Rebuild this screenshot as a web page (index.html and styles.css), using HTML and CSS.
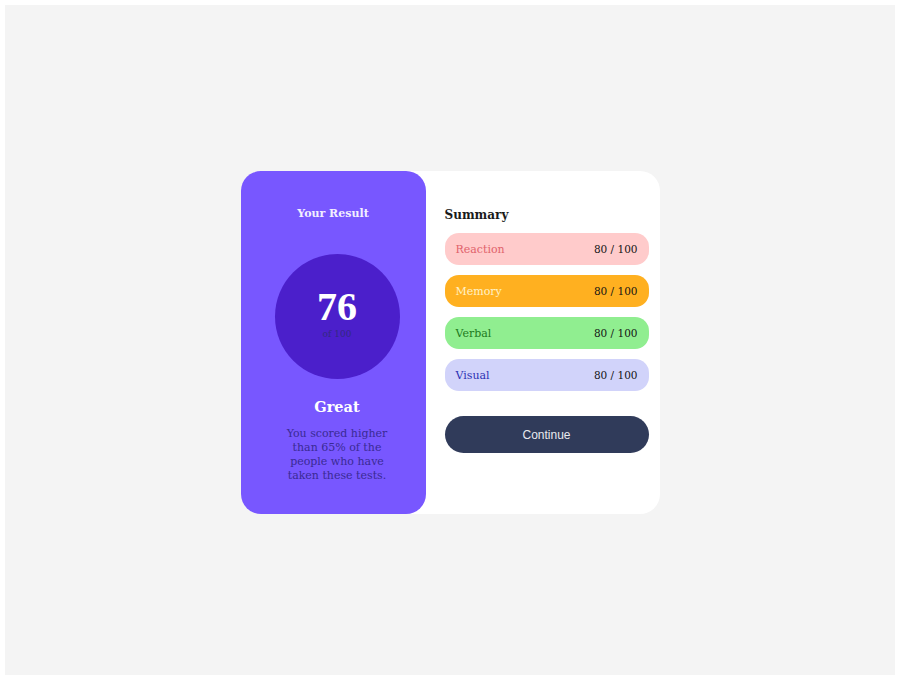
FILE: index.html
```html
<!DOCTYPE html>
<html lang="en">
<head>
<meta charset="utf-8">
<title>Results summary</title>
<link rel="stylesheet" href="styles.css">
</head>
<body>
<main class="page">
  <section class="card">
    <div class="result">
      <h1 class="result-title">Your Result</h1>
      <div class="score-circle">
        <span class="score">76</span>
        <span class="score-of">of 100</span>
      </div>
      <h2 class="grade">Great</h2>
      <p class="result-text">You scored higher than 65% of the people who have taken these tests.</p>
    </div>
    <div class="summary">
      <h2 class="summary-title">Summary</h2>
      <ul class="rows">
        <li class="row row-reaction"><span class="row-name">Reaction</span><span class="row-score">80 / 100</span></li>
        <li class="row row-memory"><span class="row-name">Memory</span><span class="row-score">80 / 100</span></li>
        <li class="row row-verbal"><span class="row-name">Verbal</span><span class="row-score">80 / 100</span></li>
        <li class="row row-visual"><span class="row-name">Visual</span><span class="row-score">80 / 100</span></li>
      </ul>
      <button class="continue">Continue</button>
    </div>
  </section>
</main>
</body>
</html>
```
FILE: styles.css
```css
html, body {
  margin: 0;
  padding: 0;
  background: #ffffff;
}
body {
  padding: 5px;
  font-family: "DejaVu Serif", "Liberation Serif", serif;
}
.page {
  box-sizing: border-box;
  width: 890px;
  height: 675px;
  background: #f4f4f4;
  display: flex;
  align-items: center;
  justify-content: center;
}
.card {
  width: 419px;
  height: 343px;
  background: #ffffff;
  border-radius: 20px;
  display: grid;
  grid-template-columns: 185px 1fr;
}
.result {
  background: #7857ff;
  border-radius: 20px;
  display: flex;
  flex-direction: column;
  align-items: center;
  padding-top: 35px;
}
.result-title {
  margin: 0;
  font-size: 11px;
  line-height: 16px;
  font-weight: bold;
  color: #f2eeff;
}
.score-circle {
  margin: 32px 0 0 8px;
  width: 125px;
  height: 125px;
  border-radius: 50%;
  background: #4b1fcb;
  display: flex;
  flex-direction: column;
  align-items: center;
  justify-content: center;
}
.score {
  font-family: "Liberation Serif", "DejaVu Serif", serif;
  font-size: 40px;
  line-height: 32px;
  font-weight: bold;
  color: #ffffff;
  margin-top: -4px;
}
.score-of {
  font-size: 9px;
  line-height: 10px;
  color: #33297f;
  margin-top: 6px;
}
.grade {
  margin: 17px 0 0 8px;
  font-size: 14.5px;
  line-height: 22px;
  font-weight: bold;
  color: #ffffff;
}
.result-text {
  margin: 9px 0 0 8px;
  width: 120px;
  text-align: center;
  font-size: 11px;
  line-height: 14px;
  color: #3a2a94;
}
.summary {
  padding: 36px 11px 0 19px;
  display: flex;
  flex-direction: column;
}
.summary-title {
  margin: 0;
  font-size: 12px;
  line-height: 16px;
  font-weight: bold;
  color: #1a1a1a;
}
.rows {
  list-style: none;
  margin: 10px 0 0;
  padding: 0;
  display: flex;
  flex-direction: column;
  gap: 10px;
}
.row {
  height: 32px;
  border-radius: 14px;
  display: flex;
  align-items: center;
  justify-content: space-between;
  padding: 0 11px;
  font-size: 11px;
}
.row-score {
  color: #141414;
  font-size: 10.5px;
}
.row-reaction { background: #ffcbcb; }
.row-reaction .row-name { color: #e1636b; }
.row-memory { background: #ffb020; }
.row-memory .row-name { color: #fff2c8; }
.row-verbal { background: #90ee90; }
.row-verbal .row-name { color: #1d7a20; }
.row-visual { background: #d1d3fa; }
.row-visual .row-name { color: #2d31b4; }
.continue {
  margin-top: 25px;
  height: 37px;
  border: none;
  border-radius: 19px;
  background: #303b5a;
  color: #e8e9ee;
  font-family: "Liberation Sans", Arial, sans-serif;
  font-size: 12px;
}
```
